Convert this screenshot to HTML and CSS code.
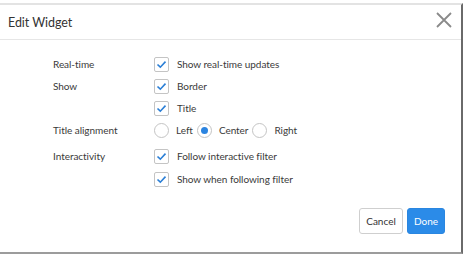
FILE: index.html
```html
<!DOCTYPE html>
<html>
<head>
<meta charset="utf-8">
<link rel="stylesheet" href="styles.css">
</head>
<body>
<div class="modal">
  <div class="header">
    <h1 class="title">Edit Widget</h1>
    <button class="close" aria-label="Close">
      <svg width="16" height="16" viewBox="0 0 16 16"><path d="M1 1 L15 15 M15 1 L1 15" stroke="#8a8a8a" stroke-width="1.8" fill="none"/></svg>
    </button>
  </div>
  <div class="form">
    <div class="label">Real-time</div>
    <div class="ctrl"><span class="cb"><svg width="15" height="15" viewBox="0 0 15 15"><path d="M3.5 7.5 L6.3 10.2 L11.5 4.6" stroke="#2b7fd6" stroke-width="1.6" fill="none"/></svg></span><span>Show real-time updates</span></div>

    <div class="label">Show</div>
    <div class="ctrl"><span class="cb"><svg width="15" height="15" viewBox="0 0 15 15"><path d="M3.5 7.5 L6.3 10.2 L11.5 4.6" stroke="#2b7fd6" stroke-width="1.6" fill="none"/></svg></span><span>Border</span></div>

    <div class="label"></div>
    <div class="ctrl"><span class="cb"><svg width="15" height="15" viewBox="0 0 15 15"><path d="M3.5 7.5 L6.3 10.2 L11.5 4.6" stroke="#2b7fd6" stroke-width="1.6" fill="none"/></svg></span><span>Title</span></div>

    <div class="label">Title alignment</div>
    <div class="ctrl radios">
      <span class="opt"><span class="rb"></span><span>Left</span></span>
      <span class="opt"><span class="rb on"></span><span>Center</span></span>
      <span class="opt"><span class="rb"></span><span>Right</span></span>
    </div>

    <div class="label">Interactivity</div>
    <div class="ctrl"><span class="cb"><svg width="15" height="15" viewBox="0 0 15 15"><path d="M3.5 7.5 L6.3 10.2 L11.5 4.6" stroke="#2b7fd6" stroke-width="1.6" fill="none"/></svg></span><span>Follow interactive filter</span></div>

    <div class="label"></div>
    <div class="ctrl"><span class="cb"><svg width="15" height="15" viewBox="0 0 15 15"><path d="M3.5 7.5 L6.3 10.2 L11.5 4.6" stroke="#2b7fd6" stroke-width="1.6" fill="none"/></svg></span><span>Show when following filter</span></div>
  </div>
  <div class="footer">
    <button class="btn cancel">Cancel</button>
    <button class="btn done">Done</button>
  </div>
</div>
</body>
</html>
```

FILE: styles.css
```css
html, body {
  margin: 0;
  padding: 0;
  background: #ffffff;
}
body {
  font-family: Lato, "Open Sans", sans-serif;
  color: #3a3a3a;
  font-size: 10px;
  letter-spacing: -0.05px;
}
.modal {
  box-sizing: border-box;
  margin-top: 3px;
  width: 463px;
  height: 251px;
  border-top: 2px solid #e3e3e3;
  border-right: 2px solid #6a6a6a;
  border-bottom: 2px solid #9c9c9c;
  display: flex;
  flex-direction: column;
}
.header {
  height: 34px;
  border-bottom: 1px solid #e6e6e6;
  display: flex;
  align-items: center;
  justify-content: space-between;
  padding: 0 9px 0 8px;
}
.title {
  margin: 0;
  font-size: 12.5px;
  font-weight: normal;
  color: #333;
}
.close {
  border: 0;
  background: none;
  padding: 0;
  width: 16px;
  height: 16px;
  display: flex;
  margin-top: -4px;
}
.form {
  display: grid;
  grid-template-columns: 101px auto;
  grid-template-rows: 22px 22px 22px 22px 26px 23px;
  padding: 13px 0 0 53px;
}
.label, .ctrl {
  display: flex;
  align-items: center;
  height: 22px;
  align-self: end;
}
.cb {
  box-sizing: border-box;
  width: 15px;
  height: 15px;
  border: 1px solid #c4c4c4;
  border-radius: 2px;
  margin-right: 8px;
  display: flex;
  align-items: center;
  justify-content: center;
}
.cb svg {
  flex: none;
}
.radios {
  gap: 4px;
}
.opt {
  display: flex;
  align-items: center;
}
.rb {
  box-sizing: border-box;
  width: 15px;
  height: 15px;
  border: 1px solid #c4c4c4;
  border-radius: 50%;
  margin-right: 7px;
  display: flex;
  align-items: center;
  justify-content: center;
}
.rb.on::after {
  content: "";
  width: 7px;
  height: 7px;
  border-radius: 50%;
  background: #2b84e0;
}
.footer {
  margin-top: auto;
  display: flex;
  justify-content: flex-end;
  gap: 4px;
  padding: 0 16px 18px 0;
}
.btn {
  font-family: Lato, "Open Sans", sans-serif;
  font-size: 10px;
  height: 26px;
  border-radius: 3px;
  padding: 0;
  cursor: pointer;
}
.cancel {
  width: 44px;
  background: #fff;
  border: 1px solid #cfcfcf;
  color: #333;
}
.done {
  width: 38px;
  background: #2b8be8;
  border: 1px solid #2a86e0;
  color: #fff;
}
```
